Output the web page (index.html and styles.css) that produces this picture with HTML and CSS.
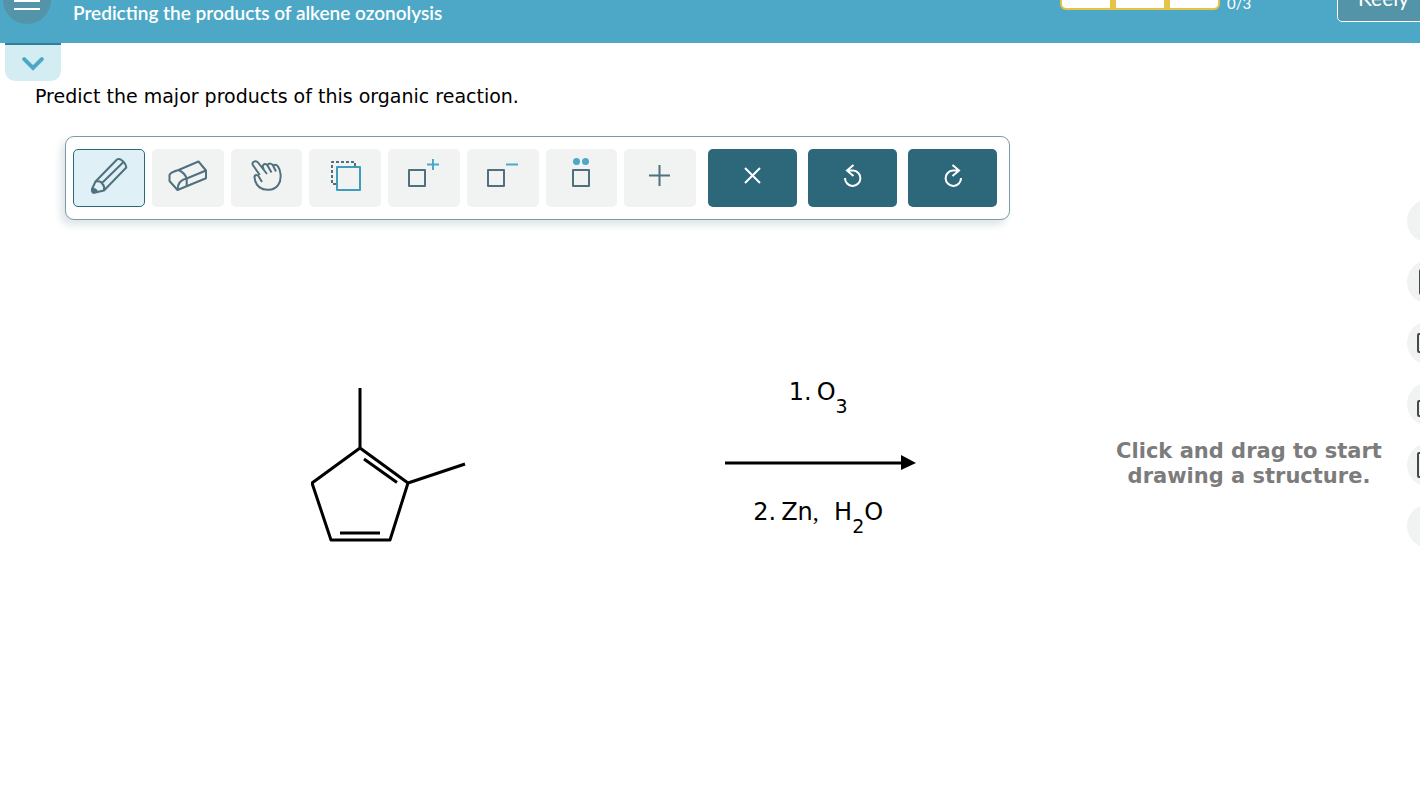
FILE: index.html
```html
<!DOCTYPE html>
<html lang="en">
<head>
    <meta charset="UTF-8">
    <title>Predicting the products of alkene ozonolysis</title>
    <link rel="stylesheet" href="styles.css">
</head>
<body>
    <header class="topbar">
        <button type="button" class="menu-btn" aria-label="Menu"><span></span><span></span></button>
        <h1>Predicting the products of alkene ozonolysis</h1>
        <div class="progress"><i></i><i></i><i></i></div>
        <span class="score">0/3</span>
        <button type="button" class="user-btn">Keely</button>
    </header>

    <button type="button" class="expand-btn" aria-label="Expand">
        <svg width="22" height="14" viewBox="0 0 22 14"><path d="M2.2 2.2L11 11L19.8 2.2"/></svg>
    </button>

    <main>
        <p class="question">Predict the major products of this organic reaction.</p>

        <div class="toolbar">
            <div class="tools">
                <button type="button" class="active" aria-label="Draw">
                    <svg width="40" height="40" viewBox="0 0 40 40">
                        <path class="line" d="M6.5 25.5L28 3.5Q30 2.300 32.7 4.2Q37 7.5 37.3 11.5L15 34.500L5 36.700Q2.500 36.700 3 33Z"/>
                        <path class="line" d="M6.5 25.5Q12 24.5 13.5 28Q16 30.5 15 34.5M13 27L34.5 6"/>
                        <path class="solid" d="M3 31.5Q6.5 31.5 8.5 34V37L3.5 37.5Q2 36 3 31.5Z"/>
                    </svg>
                </button>
                <button type="button" aria-label="Erase">
                    <svg width="40" height="32" viewBox="0 0 40 32">
                        <path class="line" d="M1.5 15Q2 12.5 10.5 10L30.5 1.5L38 10.500V18.300L9.500 30L1.500 21Z"/>
                        <path class="line" d="M38 10.5L18.7 18.5Q9.5 20.5 9.5 30M10.5 10Q17 13 18.7 18.5V26"/>
                    </svg>
                </button>
                <button type="button" aria-label="Move">
                    <svg width="32" height="32" viewBox="0 0 32 32">
                        <path class="line" d="M9.8 15L2.800 5C1.300 2 5.800 -.3 8 2.500L17 14M13.800 9.500L12.500 6.500C13.500 3 16.500 3.500 17.500 5.500L21.500 12.500M17.500 5.500C19 2.500 22 3.500 23 5.500L26 11.500M23 5.500C27 3 30 8 30.500 14C31.500 23 27 29.500 18.500 29.800C9.500 30 5.500 25 4.500 17.500C4.500 14 8 14.500 9 17L12 22"/>
                    </svg>
                </button>
                <button type="button" aria-label="Select">
                    <svg width="32" height="32" viewBox="0 0 32 32">
                        <path class="line dotted" d="M7 24H3V2H26V6"/>
                        <path class="line blue" d="M8 7H31V30H8Z"/>
                    </svg>
                </button>
                <button type="button" aria-label="Positive charge">
                    <svg width="32" height="32" viewBox="0 0 32 32">
                        <path class="line" d="M1 10H17V26H1Z"/>
                        <path class="line charge" d="M19 4.500H31M25 -1V10"/>
                    </svg>
                </button>
                <button type="button" aria-label="Negative charge">
                    <svg width="32" height="32" viewBox="0 0 32 32">
                        <path class="line" d="M1 10H17V26H1Z"/>
                        <path class="line charge" d="M19 4.500H31"/>
                    </svg>
                </button>
                <button type="button" aria-label="Lone pair">
                    <svg width="32" height="32" viewBox="0 0 32 32">
                        <path class="line" d="M8 10H24V26H8Z"/>
                        <circle class="dot" cx="11.5" cy="1.5" r="3.5"/>
                        <circle class="dot" cx="20.5" cy="1.5" r="3.5"/>
                    </svg>
                </button>
                <button type="button" aria-label="More">
                    <svg width="24" height="24" viewBox="0 0 24 24"><path class="line" d="M1 11.500H22M11.500 1V22"/></svg>
                </button>
            </div>
            <div class="actions">
                <button type="button" aria-label="Clear">
                    <svg width="24" height="24" viewBox="0 0 24 24"><path d="M4 4L19 19M19 4L4 19"/></svg>
                </button>
                <button type="button" aria-label="Undo">
                    <svg width="24" height="24" viewBox="0 0 24 24"><path d="M12.5 1L6 6.500L12.500 12M6 6.500H12A7.700 7.700 0 1 1 4 14"/></svg>
                </button>
                <button type="button" aria-label="Redo">
                    <svg width="24" height="24" viewBox="0 0 24 24"><path d="M11.5 1L18 6.500L11.500 12M18 6.500H12A7.700 7.700 0 1 0 20 14"/></svg>
                </button>
            </div>
        </div>

        <div class="reaction">
            <svg class="molecule" width="156" height="156" viewBox="0 0 156 156">
                <path d="M49 2V62L97 97L79 154H20L1 97L49 62M97 97L154 78M53 73L86 96.5M29 147H69"/>
            </svg>
            <div class="conditions">
                <p>1.<span>O<sub>3</sub></span></p>
                <svg width="192" height="16" viewBox="0 0 192 16">
                    <path class="shaft" d="M0 8H178"/>
                    <path d="M176 0L191 8L176 15Z"/>
                </svg>
                <p>2.<span>Zn<b class="comma">,</b> &nbsp;H<sub>2</sub>O</span></p>
            </div>
            <p class="prompt">Click and drag to start<br>drawing a structure.</p>
        </div>
    </main>

    <nav class="side-rail" aria-label="Resources">
        <button type="button" aria-label="Help"></button>
        <button type="button" aria-label="Calculator"><i class="bar"></i></button>
        <button type="button" aria-label="Data"><i class="box"></i></button>
        <button type="button" aria-label="Periodic table"><i class="box low"></i></button>
        <button type="button" aria-label="Notes"><i class="box tall"></i></button>
        <button type="button" aria-label="Text size"></button>
    </nav>
</body>
</html>
```

FILE: styles.css
```css
* {
    box-sizing: border-box;
}

body {
    margin: 0;
    min-height: 100vh;
    background-color: #fff;
    color: #000;
    font-family: Verdana, "DejaVu Sans", sans-serif;
    overflow-x: hidden;
}

button {
    border: none;
    padding: 0;
    cursor: pointer;
}

p {
    margin: 0;
}

/* header, scrolled so only its lower edge shows */
.topbar {
    display: flex;
    align-items: flex-end;
    height: 43px;
    padding-left: 3px;
    background-color: #4da8c7;
    color: #fff;
    font-family: Lato, sans-serif;
    overflow: hidden;
}

.menu-btn {
    display: flex;
    flex-direction: column;
    justify-content: flex-end;
    align-items: center;
    gap: 6px;
    flex: none;
    width: 48px;
    height: 48px;
    padding-bottom: 14px;
    margin-bottom: 19px;
    border-radius: 50%;
    background-color: #5394a9;
}

.menu-btn span {
    width: 26px;
    height: 2px;
    background-color: #fff;
}

.topbar h1 {
    flex: 1;
    margin: 0 0 18px 22px;
    font-size: 19px;
    line-height: 24px;
    font-weight: 600;
}

.progress {
    display: flex;
    gap: 6px;
    width: 160px;
    height: 20px;
    margin-bottom: 33px;
    border: 2px solid #e6c346;
    border-radius: 6px;
    background-color: #e6c346;
    overflow: hidden;
}

.progress i {
    flex: 1;
    background-color: #fff;
}

.progress i:first-child {
    border-radius: 0 0 0 4px;
}

.progress i:last-child {
    border-radius: 0 0 4px 0;
}

.score {
    width: 110px;
    margin-bottom: 30px;
    padding-left: 7px;
    font-size: 15px;
    line-height: 20px;
}

.user-btn {
    width: 104px;
    height: 44px;
    flex: none;
    margin: 0 -21px 21px 7px;
    padding: 0 0 4px 20px;
    border: 1px solid #fff;
    border-radius: 5px;
    background-color: #5394a9;
    color: #fff;
    font: 21px/38px Lato, sans-serif;
    text-align: left;
}

.expand-btn {
    display: block;
    width: 56px;
    height: 38px;
    margin-left: 5px;
    border-top: 2px solid #2f7f98;
    border-radius: 0 0 10px 10px;
    background-color: #d4edf3;
}

.expand-btn svg {
    display: block;
    margin: 2px auto 0;
    fill: none;
    stroke: #4da8c7;
    stroke-width: 4;
    stroke-linecap: round;
}

.question {
    margin-left: 35px;
    padding-top: 3px;
    font-size: 19px;
    line-height: 24px;
}

.toolbar {
    display: flex;
    gap: 12px;
    max-width: 945px;
    margin: 28px 24px 0 65px;
    padding: 12px 12px 12px 7px;
    border: 1px solid #7e9ba5;
    border-radius: 9px;
    background-color: #fff;
    box-shadow: -4px 5px 8px #dde4e7;
}

.tools {
    display: grid;
    grid-template-columns: repeat(8, 1fr);
    gap: 7px;
    flex: 1;
}

.tools button,
.actions button {
    display: flex;
    justify-content: center;
    align-items: center;
    height: 58px;
    border-radius: 5px;
    background-color: #f1f3f2;
}

.tools svg,
.actions svg {
    margin-bottom: 4px;
    overflow: visible;
}

.tools button.active {
    border: 1px solid #2c687a;
    background-color: #dff1f6;
}

.line {
    fill: none;
    stroke: #4f717d;
    stroke-width: 2;
    stroke-linejoin: round;
}

.dotted {
    stroke-dasharray: 3 2;
}

.blue {
    stroke: #419cb9;
    fill: #f1f3f2;
}

.charge {
    stroke: #4da8c7;
}

.solid {
    fill: #4f717d;
}

.dot {
    fill: #4da8c7;
}

.actions {
    display: flex;
    gap: 11px;
}

.actions button {
    width: 89px;
    background-color: #2c687a;
}

.actions svg {
    fill: none;
    stroke: #fff;
    stroke-width: 2;
}

.reaction {
    display: grid;
    grid-template-columns: 214px 1fr 266px;
    align-items: center;
    margin-top: 157px;
    padding: 0 38px 0 calc(22% - 1px);
}

.molecule path {
    fill: none;
    stroke: #000;
    stroke-width: 3;
    stroke-linejoin: round;
}

.conditions {
    display: flex;
    flex-direction: column;
    align-items: center;
    padding-bottom: 24px;
    font-size: 24px;
    line-height: 30px;
}

.conditions p {
    padding-right: 5px;
}

.conditions p span {
    margin-left: 5px;
}

.conditions sub {
    font-size: 19px;
    line-height: 0;
    vertical-align: -13px;
}

.comma {
    font-family: "Liberation Serif", serif;
    font-weight: normal;
}

.conditions svg {
    display: block;
    margin: 48px 0 26px;
}

.shaft {
    stroke: #000;
    stroke-width: 3;
}

.prompt {
    color: #7c7c7c;
    font-size: 21px;
    line-height: 25px;
    font-weight: bold;
    text-align: center;
    white-space: nowrap;
}

/* resource buttons, tucked half out of the window */
.side-rail {
    position: fixed;
    top: 199px;
    right: -31px;
    display: flex;
    flex-direction: column;
    gap: 17px;
}

.side-rail button {
    display: flex;
    align-items: center;
    width: 44px;
    height: 44px;
    padding-left: 10px;
    border-radius: 50%;
    background-color: #f1f3f2;
}

.side-rail i {
    width: 22px;
    height: 20px;
    border: 2px solid #444b4e;
    border-radius: 2px;
}

.side-rail .bar {
    height: 26px;
    margin-left: 2px;
}

.side-rail .low {
    height: 17px;
    margin-top: 8px;
}

.side-rail .tall {
    height: 26px;
}
```
